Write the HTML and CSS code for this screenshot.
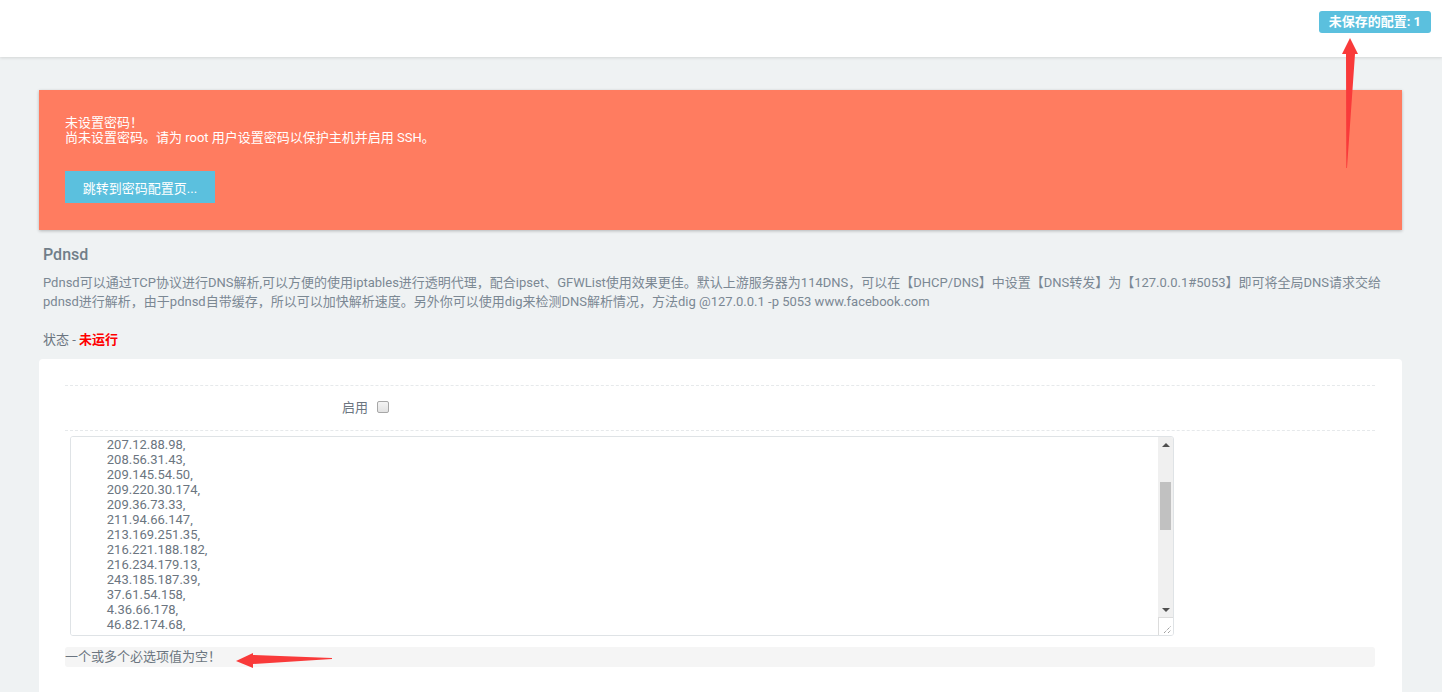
FILE: index.html
```html
<!DOCTYPE html>
<html lang="zh-CN">
<head>
    <meta charset="UTF-8">
    <title>Pdnsd</title>
    <link rel="stylesheet" href="styles.css">
</head>
<body>
    <header class="topbar">
        <span class="unsaved">未保存的配置: 1</span>
    </header>

    <div class="main">
        <div class="alert">
            <div class="alert-text">
                <p>未设置密码！</p>
                <p>尚未设置密码。请为 root 用户设置密码以保护主机并启用 SSH。</p>
            </div>
            <button class="alert-btn">跳转到密码配置页...</button>
        </div>

        <div class="intro">
            <h2 class="title">Pdnsd</h2>
            <p class="desc">Pdnsd可以通过TCP协议进行DNS解析,可以方便的使用iptables进行透明代理，配合ipset、GFWList使用效果更佳。默认上游服务器为114DNS，可以在【DHCP/DNS】中设置【DNS转发】为【127.0.0.1#5053】即可将全局DNS请求交给pdnsd进行解析，由于pdnsd自带缓存，所以可以加快解析速度。另外你可以使用dig来检测DNS解析情况，方法dig @127.0.0.1 -p 5053 www.facebook.com</p>
            <p class="status">状态 - <b>未运行</b></p>
        </div>

        <div class="card">
            <div class="form-row">
                <label class="form-label" for="enable">启用</label>
                <input type="checkbox" id="enable" class="form-check">
            </div>
            <div class="editor">
                <div class="editor-box">
                    <textarea id="conf" class="conf" spellcheck="false"></textarea>
                    <div class="vscroll">
                        <div class="sb-btn"><span class="tri-up"></span></div>
                        <div class="sb-track"><div class="sb-thumb"></div></div>
                        <div class="sb-btn"><span class="tri-down"></span></div>
                        <div class="sb-corner">
                            <svg width="14" height="17" viewBox="0 0 14 17">
                                <path d="M5 15 L12 8 M9 15 L12 12" stroke="#777" stroke-width="1" stroke-dasharray="1 1"/>
                            </svg>
                        </div>
                    </div>
                </div>
            </div>
            <div class="form-error">一个或多个必选项值为空！</div>
        </div>
    </div>

    <svg class="marks" width="1442" height="692" viewBox="0 0 1442 692">
        <path d="M1350 38 L1358 54 L1355 54 L1347 168 L1346.3 168 L1346 54 L1342 54 Z" fill="#f93a3a"/>
        <path d="M236 661 L253 653 L253 655 L332 658 L332 659 L253 664 L253 668 Z" fill="#f93a3a"/>
    </svg>

    <script>
        var ips = ['128.121.126.139', '159.106.121.75', '169.132.13.103', '192.67.198.6',
            '202.106.1.2', '202.181.7.85', '203.161.230.171', '203.98.7.65',
            '207.12.88.98', '208.56.31.43', '209.145.54.50', '209.220.30.174',
            '209.36.73.33', '211.94.66.147', '213.169.251.35', '216.221.188.182',
            '216.234.179.13', '243.185.187.39', '37.61.54.158', '4.36.66.178',
            '46.82.174.68', '59.24.3.173', '64.33.88.161', '64.33.99.47',
            '64.66.163.251', '65.104.202.252', '65.160.219.113', '66.45.252.237',
            '72.14.205.104', '72.14.205.99', '78.16.49.15', '8.7.198.45',
            '93.46.8.89;'];
        var tail = ['\treject_policy = fail;', '}', '', 'server {', '\tlabel = "opendns";',
            '\tip = 208.67.222.222, 208.67.220.220;', '\tport = 443;', '\ttimeout = 5;', '}'];
        var lines = ips.map(function (s) {
            return '\t' + (s.slice(-1) === ';' ? s : s + ',');
        }).concat(tail);
        var ta = document.getElementById('conf');
        ta.value = lines.join('\n');
        ta.scrollTop = 4 + 8 * 15;
    </script>
</body>
</html>
```

FILE: styles.css
```css
* {
    margin: 0;
    padding: 0;
    box-sizing: border-box;
}

body {
    font-family: Roboto, "Noto Sans CJK SC", sans-serif;
    font-size: 13px;
    background-color: #eff2f3;
    color: #6b7580;
    position: relative;
    overflow: hidden;
    height: 692px;
}

.topbar {
    height: 57px;
    background: white;
    box-shadow: 0 1px 3px rgba(0,0,0,0.12);
    display: flex;
    justify-content: flex-end;
    align-items: flex-start;
    padding: 11px 11px 0 0;
}

.unsaved {
    background: #5bc0de;
    color: white;
    font-weight: bold;
    font-size: 13px;
    line-height: 22px;
    height: 22px;
    padding: 0 10px;
    border-radius: 3px;
}

.main {
    padding: 33px 40px 0 39px;
}

.alert {
    background: #ff7c60;
    color: white;
    padding: 25px 26px 27px;
    box-shadow: 0 1px 3px rgba(0,0,0,0.25);
    height: 140px;
}

.alert-text p {
    line-height: 15px;
}

.alert-btn {
    margin-top: 26px;
    background: #5bc0de;
    color: white;
    border: none;
    font-family: inherit;
    font-size: 13px;
    height: 32px;
    width: 150px;
}

.intro {
    padding: 14px 4px 0;
}

.title {
    font-size: 16px;
    font-weight: 500;
    color: #717e89;
    line-height: 22px;
}

.desc {
    margin-top: 7px;
    line-height: 19px;
    color: #7b8893;
}

.status {
    margin-top: 20px;
    line-height: 18px;
    color: #6b7580;
}

.status b {
    color: #f00;
}

.card {
    margin-top: 10px;
    background: white;
    border-radius: 4px;
    padding: 26px 27px 40px 26px;
}

.form-row {
    display: flex;
    align-items: center;
    gap: 9px;
    height: 46px;
    padding-bottom: 3px;
    border-top: 1px dashed #e6e9eb;
    border-bottom: 1px dashed #e6e9eb;
}

.form-label {
    width: 303px;
    text-align: right;
}

.form-check {
    appearance: none;
    width: 12px;
    height: 12px;
    margin-top: 1px;
    border: 1px solid #a7a7a7;
    border-radius: 2px;
    background: linear-gradient(#f4f4f4, #e2e2e2);
}

.editor {
    padding: 5px 0 0 5px;
}

.editor-box {
    display: flex;
    width: 1104px;
    height: 200px;
    border: 1px solid #dfe3e6;
    border-radius: 3px;
    overflow: hidden;
}

.conf {
    flex: 1;
    border: none;
    outline: none;
    padding: 4px 4px 4px 10px;
    font-family: Roboto, sans-serif;
    font-size: 13px;
    line-height: 15px;
    color: #6b7580;
    tab-size: 8;
    resize: none;
    white-space: pre;
    overflow: hidden;
}

.vscroll {
    width: 15px;
    display: flex;
    flex-direction: column;
    background: #f0f0f0;
}

.sb-btn {
    height: 15px;
    display: flex;
    align-items: center;
    justify-content: center;
}

.tri-up,
.tri-down {
    width: 0;
    height: 0;
    border-left: 4px solid transparent;
    border-right: 4px solid transparent;
}

.tri-up {
    border-bottom: 4px solid #505050;
}

.tri-down {
    border-top: 4px solid #505050;
}

.sb-track {
    flex: 1;
    padding: 0 2px;
}

.sb-thumb {
    margin-top: 30px;
    height: 48px;
    background: #c1c1c1;
}

.sb-corner {
    height: 18px;
    background: white;
    border-top: 1px solid #dcdcdc;
    border-left: 1px solid #dcdcdc;
    display: flex;
    justify-content: flex-end;
    align-items: flex-end;
}

.form-error {
    margin-top: 11px;
    background: #f5f5f5;
    height: 20px;
    line-height: 20px;
    border-radius: 3px;
    color: #6b7580;
}

.marks {
    position: absolute;
    left: 0;
    top: 0;
    pointer-events: none;
}
```
